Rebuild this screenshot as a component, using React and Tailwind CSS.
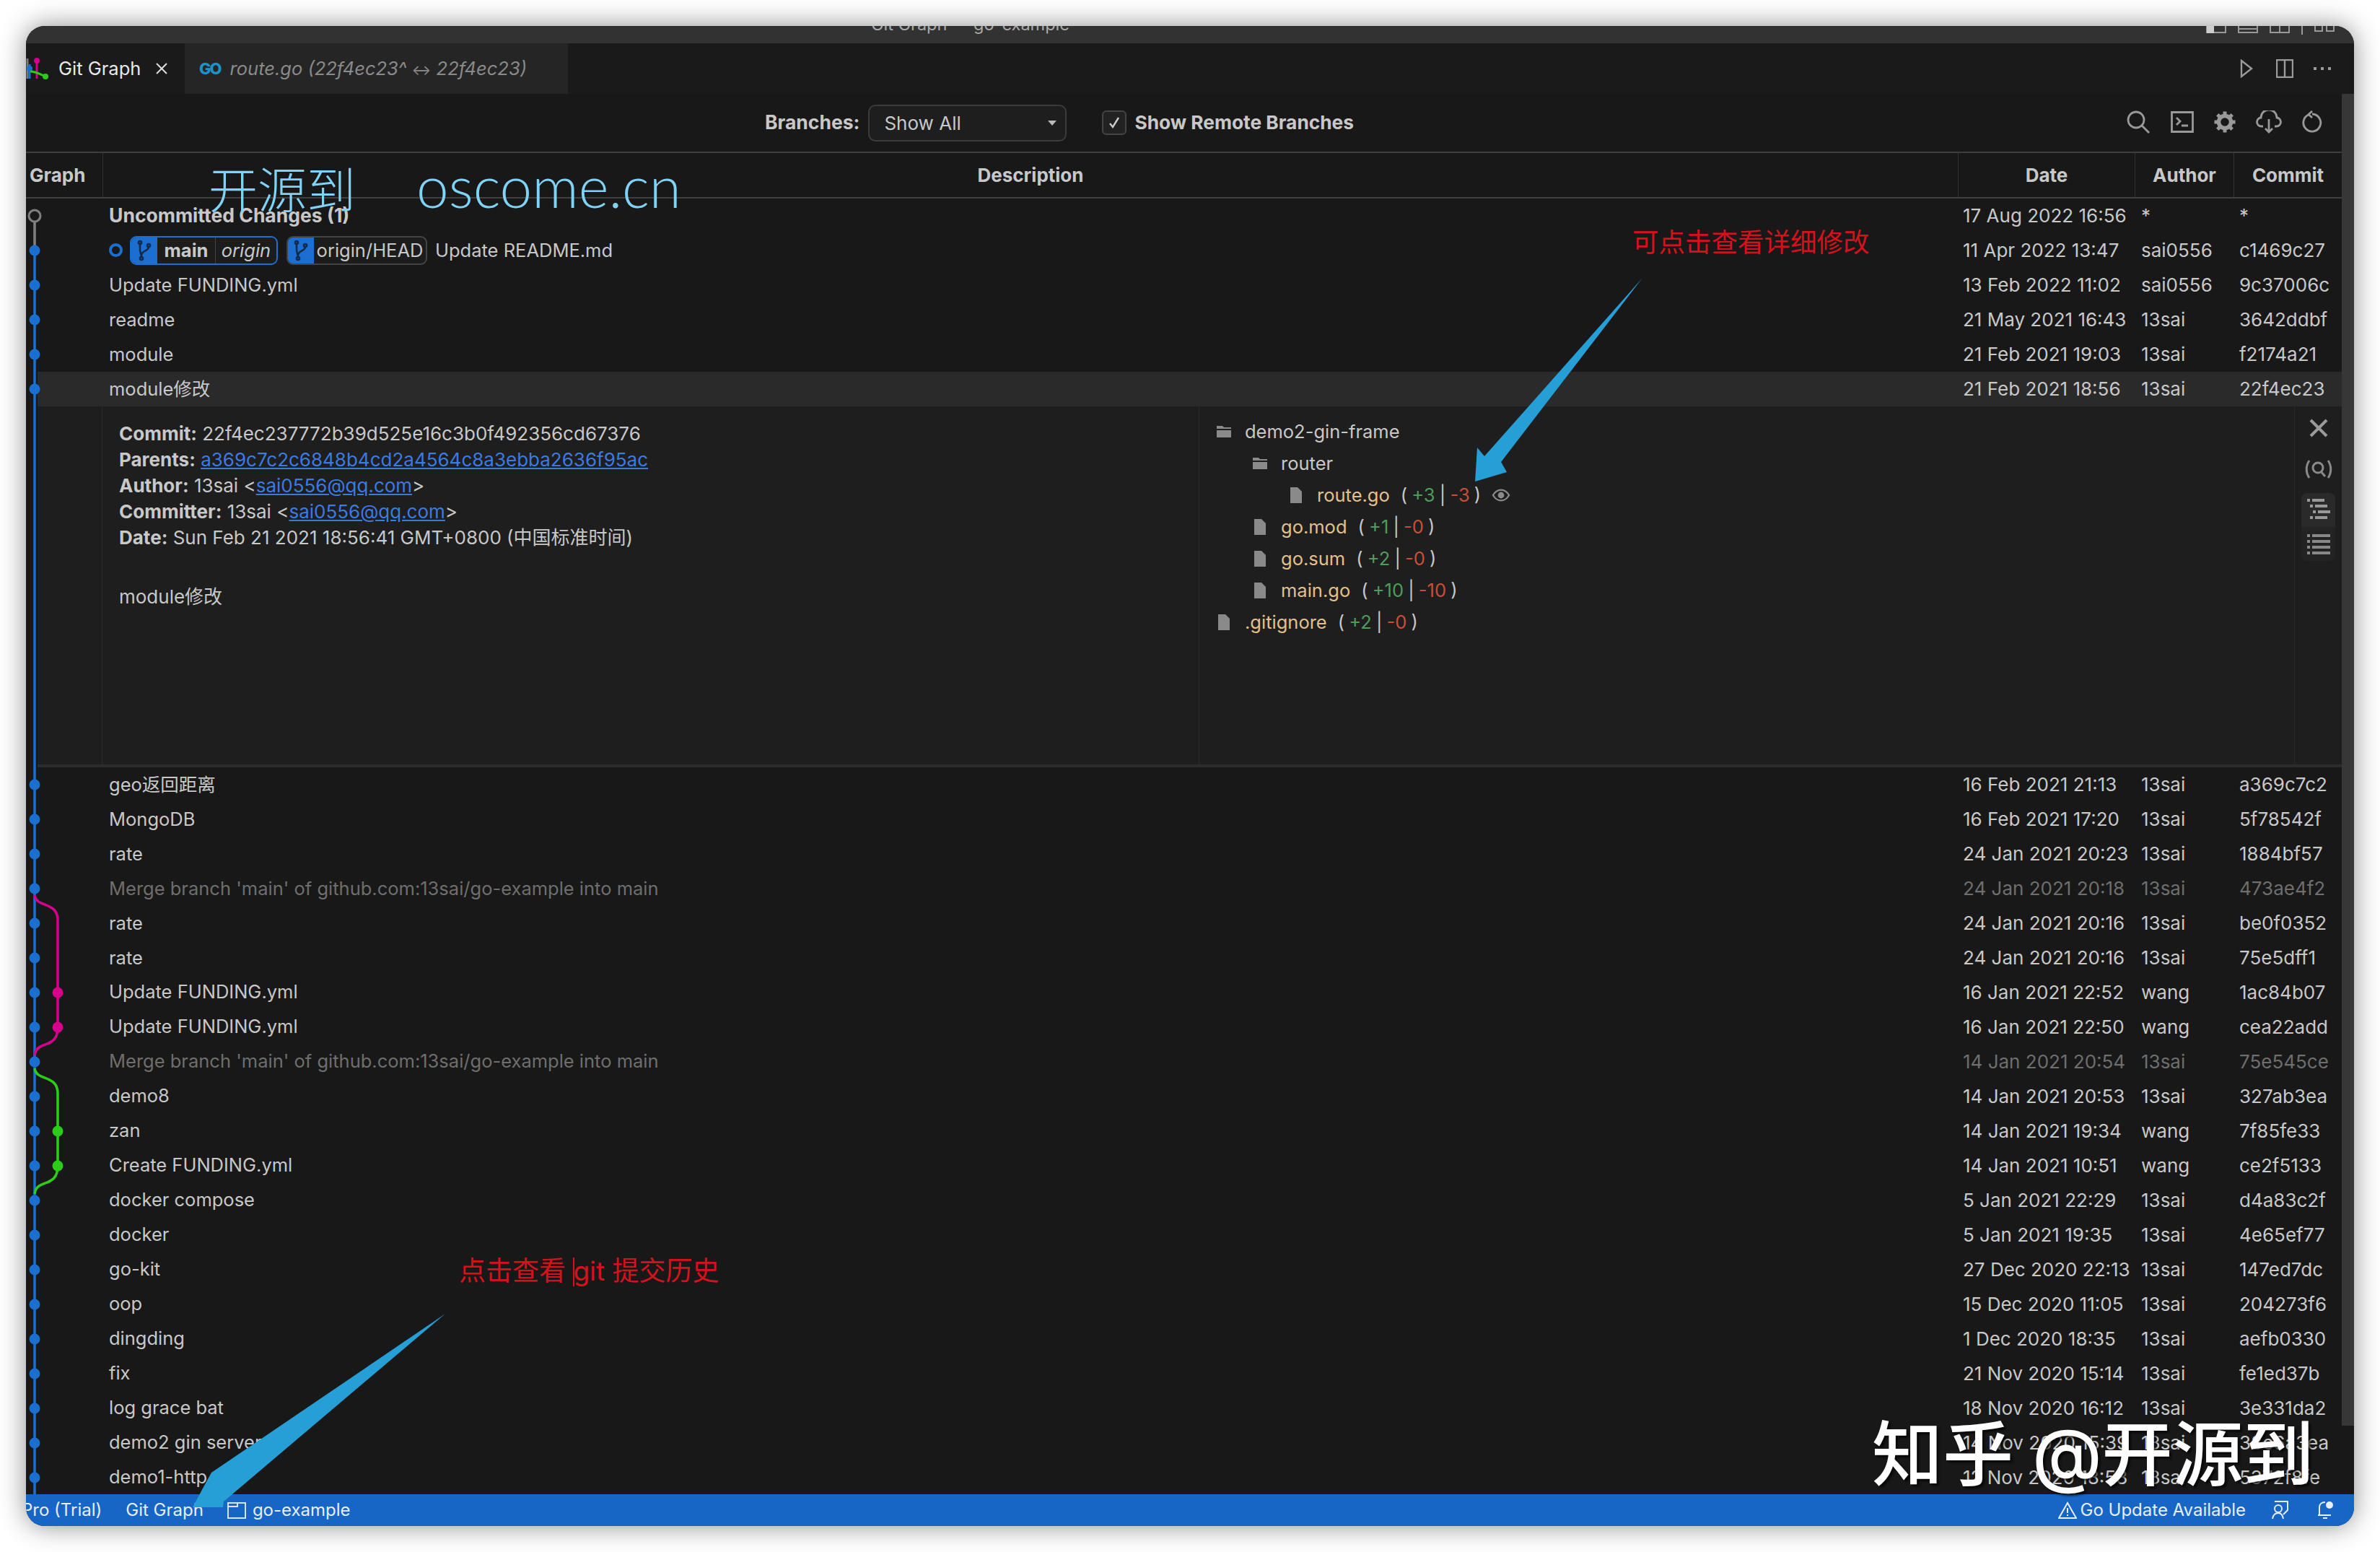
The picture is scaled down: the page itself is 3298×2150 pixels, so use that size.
const topRows = [
  { text: 'Uncommitted Changes (1)', bold: true, date: '17 Aug 2022 16:56', author: '*', hash: '*' },
  { text: 'Update README.md', refs: true, date: '11 Apr 2022 13:47', author: 'sai0556', hash: 'c1469c27' },
  { text: 'Update FUNDING.yml', date: '13 Feb 2022 11:02', author: 'sai0556', hash: '9c37006c' },
  { text: 'readme', date: '21 May 2021 16:43', author: '13sai', hash: '3642ddbf' },
  { text: 'module', date: '21 Feb 2021 19:03', author: '13sai', hash: 'f2174a21' },
  { text: 'module修改', selected: true, date: '21 Feb 2021 18:56', author: '13sai', hash: '22f4ec23' },
];

const bottomRows = [
  { text: 'geo返回距离', date: '16 Feb 2021 21:13', author: '13sai', hash: 'a369c7c2' },
  { text: 'MongoDB', date: '16 Feb 2021 17:20', author: '13sai', hash: '5f78542f' },
  { text: 'rate', date: '24 Jan 2021 20:23', author: '13sai', hash: '1884bf57' },
  { text: "Merge branch 'main' of github.com:13sai/go-example into main", dim: true, date: '24 Jan 2021 20:18', author: '13sai', hash: '473ae4f2' },
  { text: 'rate', date: '24 Jan 2021 20:16', author: '13sai', hash: 'be0f0352' },
  { text: 'rate', date: '24 Jan 2021 20:16', author: '13sai', hash: '75e5dff1' },
  { text: 'Update FUNDING.yml', date: '16 Jan 2021 22:52', author: 'wang', hash: '1ac84b07' },
  { text: 'Update FUNDING.yml', date: '16 Jan 2021 22:50', author: 'wang', hash: 'cea22add' },
  { text: "Merge branch 'main' of github.com:13sai/go-example into main", dim: true, date: '14 Jan 2021 20:54', author: '13sai', hash: '75e545ce' },
  { text: 'demo8', date: '14 Jan 2021 20:53', author: '13sai', hash: '327ab3ea' },
  { text: 'zan', date: '14 Jan 2021 19:34', author: 'wang', hash: '7f85fe33' },
  { text: 'Create FUNDING.yml', date: '14 Jan 2021 10:51', author: 'wang', hash: 'ce2f5133' },
  { text: 'docker compose', date: '5 Jan 2021 22:29', author: '13sai', hash: 'd4a83c2f' },
  { text: 'docker', date: '5 Jan 2021 19:35', author: '13sai', hash: '4e65ef77' },
  { text: 'go-kit', date: '27 Dec 2020 22:13', author: '13sai', hash: '147ed7dc' },
  { text: 'oop', date: '15 Dec 2020 11:05', author: '13sai', hash: '204273f6' },
  { text: 'dingding', date: '1 Dec 2020 18:35', author: '13sai', hash: 'aefb0330' },
  { text: 'fix', date: '21 Nov 2020 15:14', author: '13sai', hash: 'fe1ed37b' },
  { text: 'log grace bat', date: '18 Nov 2020 16:12', author: '13sai', hash: '3e331da2' },
  { text: 'demo2 gin server', date: '14 Nov 2020 15:39', author: '13sai', hash: '38e6a3ea' },
  { text: 'demo1-http', date: '12 Nov 2020 18:58', author: '13sai', hash: '5372f8fe' },
];

const tree = [
  { name: 'demo2-gin-frame', folder: true, indent: 0 },
  { name: 'router', folder: true, indent: 1 },
  { name: 'route.go', add: 3, del: 3, indent: 2, eye: true },
  { name: 'go.mod', add: 1, del: 0, indent: 1 },
  { name: 'go.sum', add: 2, del: 0, indent: 1 },
  { name: 'main.go', add: 10, del: 10, indent: 1 },
  { name: '.gitignore', add: 2, del: 0, indent: 0 },
];

const indents = ['pl-[22px]', 'pl-[72px]', 'pl-[122px]'];

const BranchIcon = ({ color = '#0f2a4d' }) => (
  <svg width="20" height="30" viewBox="0 0 20 30" fill="none" stroke={color} strokeWidth="2.6">
    <circle cx="4" cy="4" r="2" />
    <circle cx="16" cy="8" r="2" />
    <circle cx="6" cy="26" r="2" />
    <path d="M4 6v8c0 4 2 6 2 10M16 10c0 6-10 5-10 12" />
  </svg>
);

const Row = ({ row }) => (
  <div className={`flex h-[48px] items-center ${row.selected ? 'ml-[16px] bg-[#2a2a2a]' : ''} ${row.dim ? 'text-[#6e6e6e]' : 'text-[#c8c8c8]'}`}>
    <div className={row.selected ? 'w-[90px]' : 'w-[106px]'} />
    <div className={`flex w-[2571px] items-center pl-[9px] ${row.bold ? 'text-[26.5px] font-bold' : 'text-[25.5px]'}`}>
      {row.refs && (
        <>
          <span className="mr-[10px] box-border h-[19px] w-[19px] rounded-full border-[4px] border-[#1a6fd0]" />
          <span className="mr-[12px] flex h-[40px] w-[205px] items-center overflow-hidden rounded-[9px] border-2 border-[#1a6fd0] bg-[#1c1c1c]">
            <span className="flex h-full w-[36px] shrink-0 items-center justify-center bg-[#1a6fd0]">
              <BranchIcon />
            </span>
            <span className="w-[80px] shrink-0 text-center font-bold">main</span>
            <span className="flex h-full flex-1 items-center justify-center border-l border-[#444] italic">origin</span>
          </span>
          <span className="mr-[11px] flex h-[40px] w-[195px] items-center overflow-hidden rounded-[9px] border-2 border-[#444] bg-[#1c1c1c]">
            <span className="flex h-full w-[36px] shrink-0 items-center justify-center bg-[#1a6fd0]">
              <BranchIcon />
            </span>
            <span className="flex-1 text-center">origin/HEAD</span>
          </span>
        </>
      )}
      <span>{row.text}</span>
    </div>
    <div className="w-[245px] pl-[7px]">{row.date}</div>
    <div className="w-[137px] pl-[9px]">{row.author}</div>
    <div className="w-[150px] pl-[8px]">{row.hash}</div>
  </div>
);

const FolderIcon = () => (
  <svg width="24" height="24" viewBox="0 0 24 24" fill="#8a8a8a">
    <path d="M2 4h8l2 2h10v2H2zM2 10h20v10H2z" />
  </svg>
);

const FileIcon = () => (
  <svg width="24" height="26" viewBox="0 0 24 26" fill="#8a8a8a">
    <path d="M4 2h10l6 6v16H4z" />
  </svg>
);

const TreeRow = ({ item }) => (
  <div className={`flex h-[44px] items-center text-[25.5px] ${indents[item.indent]}`}>
    <span className="mr-[17px] flex w-[24px] justify-center">{item.folder ? <FolderIcon /> : <FileIcon />}</span>
    <span className={item.folder ? 'text-[#c8c8c8]' : 'text-[#e2c08d]'}>{item.name}</span>
    {!item.folder && (
      <span className="ml-[15px] whitespace-pre text-[#c8c8c8] [word-spacing:-1px]">
        {'( '}
        <span className="text-[#4f9a5c]">+{item.add}</span>
        {' | '}
        <span className="text-[#c74e39]">-{item.del}</span>
        {' )'}
      </span>
    )}
    {item.eye && (
      <svg className="ml-[15px]" width="26" height="20" viewBox="0 0 28 20" fill="none" stroke="#8a8a8a" strokeWidth="2.5">
        <path d="M2 10c3-5 7-8 12-8s9 3 12 8c-3 5-7 8-12 8S5 15 2 10z" />
        <circle cx="14" cy="10" r="3.5" fill="#8a8a8a" />
      </svg>
    )}
  </div>
);

const DetailLine = ({ children }) => <div className="h-[36px] leading-[36px] whitespace-pre">{children}</div>;

const Link = ({ children }) => <span className="text-[#3b7be0] underline">{children}</span>;

const Graph = () => {
  const ys = [347, 395, 443, 491, 539];
  for (let y = 1087; y <= 2047; y += 48) ys.push(y);
  const pink = [1375, 1423];
  const green = [1567, 1615];
  return (
    <svg className="absolute left-0 top-0" width="100" height="2078" viewBox="36 36 100 2078" fill="none" strokeWidth="3.6">
      <path d="M48 299V347" stroke="#808080" />
      <path d="M48 347V2070" stroke="#1a6fd0" />
      <path d="M48 1240C50 1258 80 1248 80 1275V1423C80 1455 50 1440 48 1462" stroke="#d6008c" />
      <path d="M48 1480C50 1498 80 1488 80 1515V1615C80 1647 50 1632 48 1654" stroke="#2ccc18" />
      <circle cx="48" cy="299" r="8" fill="#181818" stroke="#808080" strokeWidth="3" />
      {ys.map((y) => (
        <circle key={y} cx="48" cy={y} r="7.5" fill="#1a6fd0" />
      ))}
      {pink.map((y) => (
        <circle key={y} cx="80" cy={y} r="7.5" fill="#d6008c" />
      ))}
      {green.map((y) => (
        <circle key={y} cx="80" cy={y} r="7.5" fill="#2ccc18" />
      ))}
    </svg>
  );
};

const GearIcon = () => (
  <svg width="30" height="30" viewBox="0 0 30 30" fill="none">
    <circle cx="15" cy="15" r="8.5" stroke="#999" strokeWidth="5.5" />
    {[0, 45, 90, 135, 180, 225, 270, 315].map((a) => (
      <rect key={a} x="12.5" y="0.5" width="5" height="6" fill="#999" transform={`rotate(${a} 15 15)`} />
    ))}
  </svg>
);

const ListRow = ({ offset = '', line = 'w-[17px]', color = 'bg-[#999]' }) => (
  <div className={`flex h-[4px] gap-[3px] ${offset}`}>
    <i className={`w-[4px] ${color}`} />
    <i className={`${line} ${color}`} />
  </div>
);

export default function App() {
  return (
    <div className="h-[2150px] w-[3298px] overflow-hidden bg-white p-[36px] font-[Inter,'Noto_Sans_CJK_SC',sans-serif] text-[26px] text-[#c8c8c8]">
      <div className="relative flex h-[2078px] w-[3226px] flex-col overflow-hidden rounded-[26px] bg-[#181818] shadow-[0_0_36px_rgba(0,0,0,0.45)]">
        {/* title bar, cut off by the crop at the top */}
        <div className="relative h-[24px] shrink-0 overflow-hidden bg-[#323232]">
          <div className="absolute left-[1171px] top-[-17px] whitespace-nowrap text-[23.5px] leading-[30px] text-[#aaa]">Git Graph — go-example</div>
          <svg className="absolute right-[6px] top-0" width="200" height="12" viewBox="0 0 200 12" fill="none" stroke="#999" strokeWidth="2">
            <path d="M2 0V9H28V0" />
            <path d="M2 0H12V10H2z" fill="#ccc" stroke="none" />
            <path d="M46 0V9H72V0M46 4H72" />
            <path d="M90 0V9H116V0M103 0V9" />
            <path d="M134 0V12" />
            <path d="M152 0V7H162V0M168 0V7H178V0" />
          </svg>
        </div>

        {/* tabs */}
        <div className="flex h-[70px] shrink-0 items-stretch bg-[#1a1a1a]">
          <div className="flex w-[220px] items-center">
            <svg width="34" height="32" viewBox="0 0 34 32" fill="none" className="mr-[11px]">
              <path d="M2 2V30" stroke="#777" strokeWidth="3" />
              <path d="M5 10V30" stroke="#1a6fd0" strokeWidth="3" />
              <circle cx="5" cy="16" r="4" fill="#1a6fd0" />
              <path d="M15 4V30" stroke="#d6008c" strokeWidth="3" />
              <circle cx="15" cy="5" r="4" fill="#d6008c" />
              <path d="M6 20C14 20 20 24 27 27" stroke="#2ccc18" strokeWidth="3" />
              <circle cx="27" cy="27" r="4" fill="#2ccc18" />
            </svg>
            <span className="text-[25.5px] text-[#e8e8e8]">Git Graph</span>
            <svg className="ml-[20px]" width="18" height="18" viewBox="0 0 18 18" stroke="#ddd" strokeWidth="2">
              <path d="M2 2L16 16M16 2L2 16" />
            </svg>
          </div>
          <div className="flex w-[531px] items-center bg-[#252525] pl-[20px] text-[25.5px] italic text-[#8a8a8a]">
            <span className="mr-[13px] text-[22px] font-extrabold not-italic tracking-[-2px] text-[#1f93c9]">GO</span>
            <span>
              route.go (22f4ec23^ <span className="text-[20px] not-italic">↔</span> 22f4ec23)
            </span>
          </div>
          <div className="flex flex-1 items-center justify-end pr-[32px]">
            <svg width="18" height="26" viewBox="0 0 18 26" fill="none" stroke="#9a9a9a" strokeWidth="2.4">
              <path d="M2 2L16 13L2 24z" />
            </svg>
            <svg className="ml-[32px]" width="24" height="26" viewBox="0 0 24 26" fill="none" stroke="#9a9a9a" strokeWidth="2.4">
              <path d="M1 1H23V25H1zM12 1V25" />
            </svg>
            <svg className="ml-[28px]" width="24" height="6" viewBox="0 0 24 6" fill="#9a9a9a">
              <rect x="0" y="1" width="4" height="4" />
              <rect x="10" y="1" width="4" height="4" />
              <rect x="20" y="1" width="4" height="4" />
            </svg>
          </div>
        </div>

        <div className="flex min-h-0 flex-1">
          <div className="relative flex w-[3209px] flex-col overflow-hidden">
            {/* controls */}
            <div className="relative flex h-[80px] shrink-0 items-center">
              <span className="ml-[1024px] text-[26.5px] font-bold">Branches:</span>
              <div className="ml-[12px] flex h-[51px] w-[275px] items-center justify-between rounded-[10px] border-2 border-[#3c3c3c] bg-[#1e1e1e] pl-[20px] pr-[12px]">
                <span>Show All</span>
                <span className="h-0 w-0 border-x-[6px] border-t-[7px] border-x-transparent border-t-[#bbb]" />
              </div>
              <span className="ml-[49px] flex h-[34px] w-[34px] items-center justify-center rounded-[6px] border-2 border-[#444] bg-[#222]">
                <svg width="18" height="18" viewBox="0 0 18 18" fill="none" stroke="#ccc" strokeWidth="2.4">
                  <path d="M3 10L7 15L15 2" />
                </svg>
              </span>
              <span className="ml-[11px] text-[26.3px] font-bold">Show Remote Branches</span>
              <div className="absolute right-[27px] top-[22px] flex items-center gap-[28px]">
                <svg width="34" height="34" viewBox="0 0 34 34" fill="none" stroke="#999" strokeWidth="2.8">
                  <circle cx="14" cy="14" r="11" />
                  <path d="M22 22L32 32" />
                </svg>
                <svg width="32" height="30" viewBox="0 0 32 30" fill="none" stroke="#999" strokeWidth="2.8">
                  <path d="M1.5 1.5H30.5V28.5H1.5z" />
                  <path d="M8 9L13 14L8 19M15 20H24" />
                </svg>
                <GearIcon />
                <svg width="36" height="32" viewBox="0 0 36 32" fill="none" stroke="#999" strokeWidth="2.8">
                  <path d="M10 22H8a6 6 0 01-1-12 11 11 0 0122 0 6 6 0 01-1 12h-2" />
                  <path d="M18 12V30M13 25L18 30L23 25" />
                </svg>
                <svg width="28" height="32" viewBox="0 0 28 32" fill="none" stroke="#999" strokeWidth="2.8">
                  <path d="M9 6a12 12 0 105 -1" />
                  <path d="M14 1L9 5.5L14 10" />
                </svg>
              </div>
            </div>

            {/* header */}
            <div className="flex h-[65px] shrink-0 items-center border-y-2 border-[#3f3f3f] font-bold">
              <div className="flex h-full w-[106px] items-center pl-[5px]">Graph</div>
              <div className="flex h-full w-[2571px] items-center justify-center border-l border-[#333]">Description</div>
              <div className="flex h-full w-[245px] items-center justify-center border-l border-[#333]">Date</div>
              <div className="flex h-full w-[137px] items-center justify-center border-l border-[#333]">Author</div>
              <div className="flex h-full w-[150px] items-center justify-center border-l border-[#333]">Commit</div>
            </div>

            {topRows.map((row) => (
              <Row key={row.hash} row={row} />
            ))}

            {/* commit details */}
            <div className="ml-[16px] flex h-[500px] shrink-0 border-b-4 border-[#2c2c2c] bg-[#1e1e1e]">
              <div className="w-[90px] border-r border-[#2a2a2a]" />
              <div className="w-[1519px] pl-[23px] pt-[20px]">
                <DetailLine><b>Commit:</b> 22f4ec237772b39d525e16c3b0f492356cd67376</DetailLine>
                <DetailLine><b>Parents:</b> <Link>a369c7c2c6848b4cd2a4564c8a3ebba2636f95ac</Link></DetailLine>
                <DetailLine><b>Author:</b> 13sai &lt;<Link>sai0556@qq.com</Link>&gt;</DetailLine>
                <DetailLine><b>Committer:</b> 13sai &lt;<Link>sai0556@qq.com</Link>&gt;</DetailLine>
                <DetailLine><b>Date:</b> Sun Feb 21 2021 18:56:41 GMT+0800 (中国标准时间)</DetailLine>
                <div className="mt-[44px]">module修改</div>
              </div>
              <div className="w-[1518px] border-l border-[#2a2a2a] pt-[13px]">
                {tree.map((item) => (
                  <TreeRow key={item.name} item={item} />
                ))}
              </div>
              <div className="flex w-[66px] flex-col items-center border-l border-[#2a2a2a] pt-[17px]">
                <svg width="26" height="26" viewBox="0 0 26 26" stroke="#9a9a9a" strokeWidth="4">
                  <path d="M2 2L24 24M24 2L2 24" />
                </svg>
                <svg className="mt-[30px]" width="40" height="28" viewBox="0 0 40 28" fill="none" stroke="#8a8a8a" strokeWidth="3">
                  <path d="M7 2C2 9 2 19 7 26M33 2C38 9 38 19 33 26" />
                  <circle cx="19" cy="12" r="7" />
                  <path d="M23 17L29 24" />
                </svg>
                <div className="mt-[19px] flex h-[47px] w-[47px] flex-col gap-[4px] rounded-t-[8px] bg-[#2a2a2a] pl-[8px] pt-[8px]">
                  <ListRow />
                  <ListRow offset="ml-[4px]" />
                  <ListRow offset="ml-[8px]" />
                  <ListRow offset="ml-[4px]" />
                </div>
                <div className="flex h-[47px] w-[47px] flex-col gap-[4px] rounded-b-[8px] bg-[#232323] pl-[8px] pt-[10px]">
                  <ListRow line="w-[25px]" color="bg-[#888]" />
                  <ListRow line="w-[25px]" color="bg-[#888]" />
                  <ListRow line="w-[25px]" color="bg-[#888]" />
                  <ListRow line="w-[25px]" color="bg-[#888]" />
                </div>
              </div>
            </div>

            {bottomRows.map((row) => (
              <Row key={row.hash} row={row} />
            ))}
          </div>
          <div className="w-[17px] shrink-0">
            <div className="h-[1845px] bg-[#373737]" />
          </div>
        </div>

        {/* status bar */}
        <div className="flex h-[44px] shrink-0 items-center bg-[#1766c5] text-[24px] text-[#e6eefa]">
          <span className="ml-[-6px]">Pro (Trial)</span>
          <span className="ml-[33px]">Git Graph</span>
          <svg className="ml-[33px] mr-[9px]" width="26" height="24" viewBox="0 0 26 24" fill="none" stroke="#d6e4f7" strokeWidth="2">
            <path d="M1 2H25V23H1zM1 7H14V2" />
          </svg>
          <span>go-example</span>
          <svg className="ml-auto mr-[4px]" width="26" height="24" viewBox="0 0 26 24" fill="none" stroke="#e6eefa" strokeWidth="2">
            <path d="M13 2L25 23H1zM13 9V16M13 18V20" />
          </svg>
          <span>Go Update Available</span>
          <svg className="ml-[34px]" width="26" height="28" viewBox="0 0 26 28" fill="none" stroke="#e6eefa" strokeWidth="2">
            <path d="M6 2H24V14L18 20M3 26C4 20 7 18 11 18C15 18 17 20 18 26" />
            <circle cx="11" cy="12" r="5" />
          </svg>
          <svg className="ml-[38px] mr-[28px]" width="24" height="28" viewBox="0 0 24 28" fill="none" stroke="#e6eefa" strokeWidth="2">
            <path d="M4 21V10C4 6 7 3 12 3M2 21H20M9 25H15" />
            <circle cx="18" cy="7" r="5" fill="#e6eefa" stroke="none" />
          </svg>
        </div>

        <Graph />

        {/* annotations pasted over the capture */}
        <div className="absolute left-[253px] top-[182px] flex items-center whitespace-pre font-['Lato','Noto_Sans_CJK_SC',sans-serif] text-[#7fd3f7]">
          <span className="text-[68px] font-light leading-[90px]">开源到</span>
          <span className="ml-[84px] -translate-y-[6px] text-[80px] font-light leading-[90px]">oscome.cn</span>
        </div>
        <div className="absolute left-[2226px] top-[275px] text-[36.5px] leading-[50px] text-[#d8101c]">可点击查看详细修改</div>
        <div className="absolute left-[600px] top-[1698px] whitespace-pre text-[37px] leading-[50px] text-[#d8101c]">
          点击查看 <span className="-mr-[2px] inline-block h-[40px] w-[2px] translate-y-[8px] bg-[#d8101c]" />git 提交历史
        </div>
        <svg className="absolute left-0 top-0" width="3226" height="2078" viewBox="36 36 3226 2078" fill="#259fd6">
          <path d="M2276 385L2080 640L2088 654L2044 667L2047 620L2057 632Z" />
          <path d="M617 1820L310 2080L309 2088L267 2088L282 2060L293 2040Z" />
        </svg>
        <div className="absolute left-[2558px] top-[1924px] whitespace-pre text-[98px] font-medium leading-[110px] text-white [text-shadow:3px_3px_3px_rgba(0,0,0,0.7)]">知乎 @开源到</div>
      </div>
    </div>
  );
}
